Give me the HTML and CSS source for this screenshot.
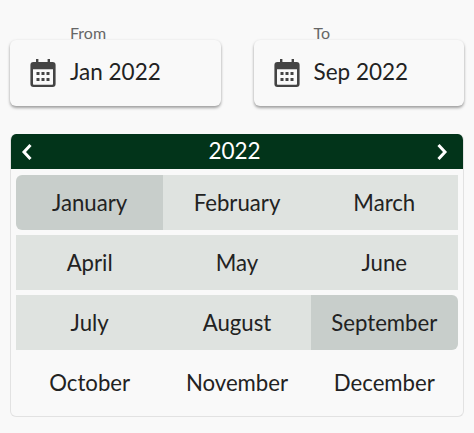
FILE: index.html
```html
<!DOCTYPE html>
<html lang="en">
<head>
<meta charset="utf-8">
<title>Month range picker</title>
<link rel="stylesheet" href="styles.css">
</head>
<body>
<svg class="sprite" width="0" height="0" aria-hidden="true">
  <symbol id="cal" viewBox="0 0 26 28">
    <path fill="#444" fill-rule="evenodd" d="M6 0h2.400v3h9.200V0H20v3h2.600A3 3 0 0 1 25.600 6v19a3 3 0 0 1-3 3H3.400a3 3 0 0 1-3-3V6a3 3 0 0 1 3-3H6zM3 10.200v14.600c0 .6.400 1 1 1h18c.6 0 1-.4 1-1V10.200z"/>
    <path fill="#444" d="M6.500 13h3v3h-3zM11.500 13h3v3h-3zM16.500 13h3v3h-3zM6.500 19h3v3h-3zM11.500 19h3v3h-3zM16.500 19h3v3h-3z"/>
  </symbol>
</svg>
<main class="page">
  <section class="ranges">
    <div class="range">
      <span class="range-label">From</span>
      <div class="range-card">
        <svg class="cal-icon"><use href="#cal"/></svg>
        <span class="range-value">Jan 2022</span>
      </div>
    </div>
    <div class="range">
      <span class="range-label">To</span>
      <div class="range-card">
        <svg class="cal-icon"><use href="#cal"/></svg>
        <span class="range-value">Sep 2022</span>
      </div>
    </div>
  </section>
  <section class="calendar">
    <header class="cal-head">
      <svg class="chev" viewBox="0 0 12 18"><path d="M9.500 2L3 9l6.500 7"/></svg>
      <span class="year">2022</span>
      <svg class="chev" viewBox="0 0 12 18"><path d="M2.500 2L9 9l-6.500 7"/></svg>
    </header>
    <div class="months">
      <div class="month sel start">January</div>
      <div class="month band">February</div>
      <div class="month band">March</div>
      <div class="month band">April</div>
      <div class="month band">May</div>
      <div class="month band">June</div>
      <div class="month band">July</div>
      <div class="month band">August</div>
      <div class="month sel end">September</div>
      <div class="month">October</div>
      <div class="month">November</div>
      <div class="month">December</div>
    </div>
  </section>
</main>
</body>
</html>
```
FILE: styles.css
```css
* { box-sizing: border-box; }
html, body { margin: 0; padding: 0; }
body {
  background: #f9f9f9;
  color: #222;
  font-family: "Lato", "Liberation Sans", sans-serif;
  width: 474px;
  height: 433px;
  overflow: hidden;
}
.sprite { position: absolute; }
.page { padding: 26px 10px 0; }
.ranges {
  display: grid;
  grid-template-columns: 210.500px 210.500px;
  justify-content: space-between;
}
.range { display: flex; flex-direction: column; }
.range-label {
  height: 14px;
  line-height: 14px;
  padding-left: 60px;
  font-size: 16px;
  color: #666;
}
.range-card {
  height: 66px;
  display: flex;
  align-items: center;
  gap: 14px;
  padding: 0 0 0 20px;
  background: #f9f9f9;
  border-radius: 6px;
  box-shadow: 0 2px 3px rgba(0,0,0,.35), 0 0 3px rgba(0,0,0,.06);
}
.cal-icon { width: 26px; height: 28px; flex: none; }
.range-value { font-size: 22.500px; line-height: 28px; margin-top: -3px; color: #222; }
.calendar {
  margin-top: 28px;
  height: 283px;
  border: 1px solid #e2e2e2;
  border-top: 0;
  border-radius: 6px;
  overflow: hidden;
}
.cal-head {
  height: 35px;
  margin: 0 -1px;
  background: #02341a;
  color: #fff;
  display: flex;
  align-items: center;
  justify-content: space-between;
  padding: 0 16px 0 11px;
}
.year { font-size: 22.500px; line-height: 28px; margin-top: -1px; }
.chev { width: 12px; height: 18px; fill: none; stroke: #fff; stroke-width: 3; }
.months {
  display: grid;
  grid-template-columns: repeat(3, 1fr);
  grid-auto-rows: 55px;
  row-gap: 5px;
  padding: 6px 5px 0;
}
.month {
  display: flex;
  align-items: center;
  justify-content: center;
  font-size: 22.200px;
  color: #222;
}
.band { background: #dfe3e0; }
.sel { background: #c8cecb; }
.start { border-radius: 6px 0 0 6px; }
.end { border-radius: 0 6px 6px 0; }
```
